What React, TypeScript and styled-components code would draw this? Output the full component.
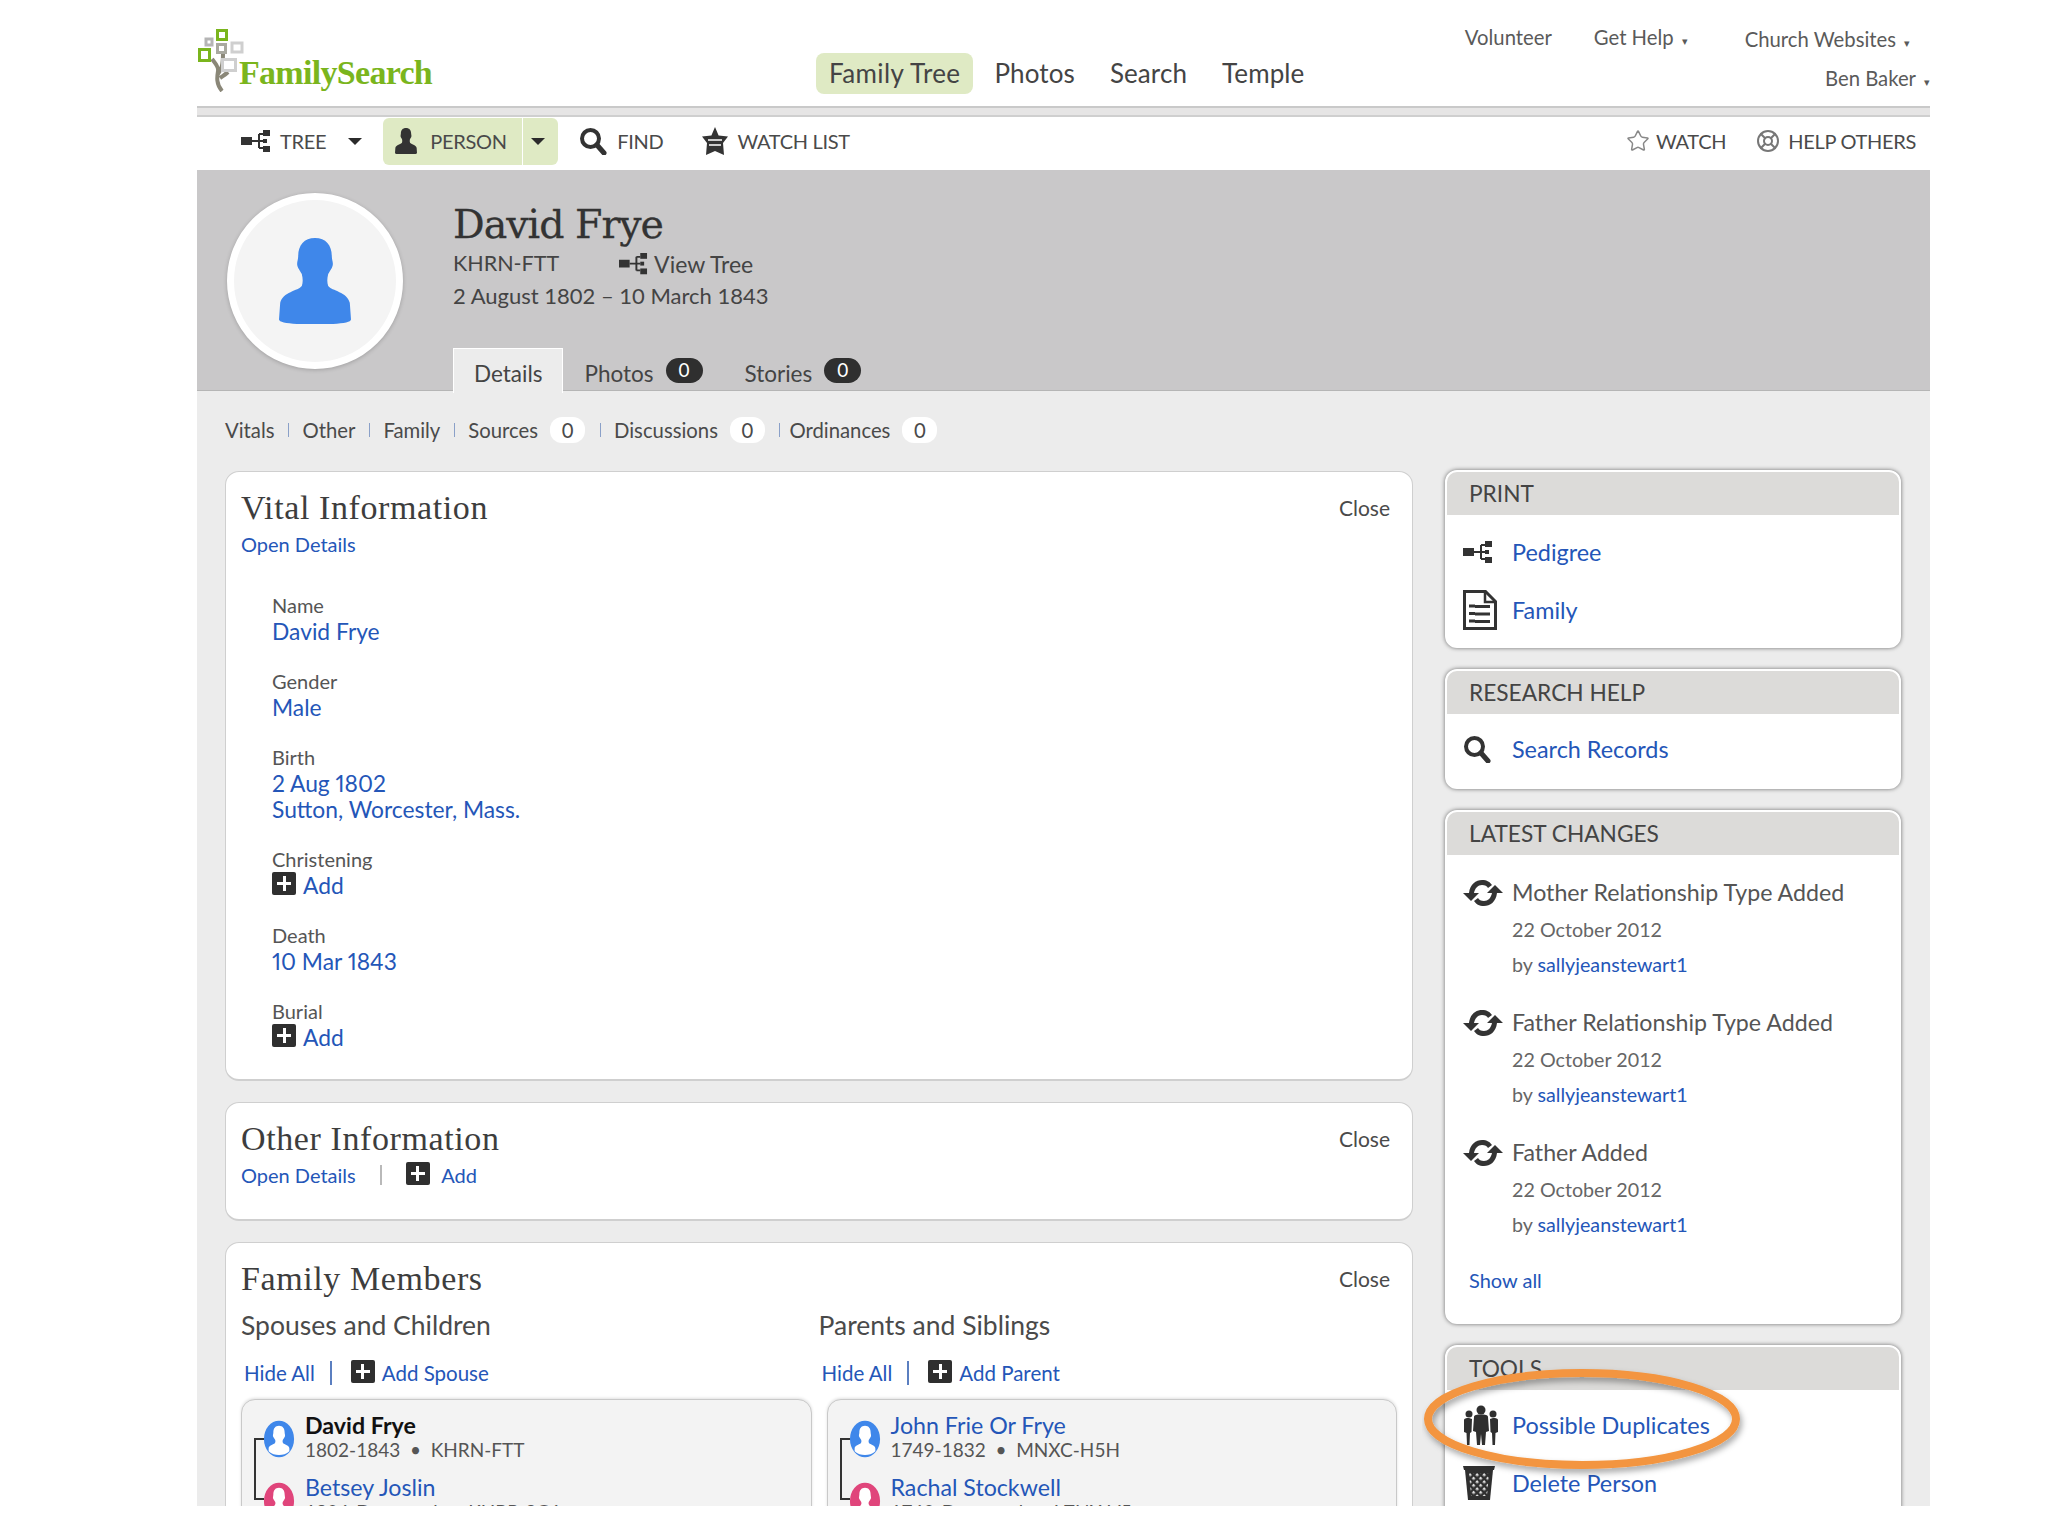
import React from 'react';
import styled, { createGlobalStyle } from 'styled-components';
import { LifeBuoy, Star } from 'lucide-react';

const INK = '#444';
const LINK = '#2456b8';
const DARK = '#2f2f2f';
const SANS = `Lato, "Open Sans", sans-serif`;

const GlobalStyle = createGlobalStyle`
  html, body { margin: 0; padding: 0; background: #fff; }
  body { font-family: ${SANS}; color: ${INK}; }
  * { box-sizing: border-box; }
`;

const Page = styled.div`
  position: relative;
  width: 1733px;
  height: 1506px;
  margin-left: 197px;
  overflow: hidden;
`;
const Header = styled.header`
  display: flex;
  height: 106px;
`;
const Logo = styled.div`
  display: flex;
  align-items: flex-end;
  width: 619px;
  height: 92px;
`;
const LogoText = styled.span`
  font-family: "Liberation Serif", serif;
  font-weight: 700;
  font-size: 34px;
  letter-spacing: -0.7px;
  color: #7ab51d;
  margin: 0 0 -1px -8px;
  line-height: 40px;
`;
const MainNav = styled.nav`
  display: flex;
  align-items: center;
  height: 41px;
  margin-top: 53px;
  gap: 35px;
`;
const NavItem = styled.span<{ $active?: boolean }>`
  font-size: 26px;
  letter-spacing: ${(p) => (p.$active ? '0.4px' : '0.1px')};
  color: ${INK};
  padding: 0 ${(p) => (p.$active ? '13px' : '0')};
  margin-right: ${(p) => (p.$active ? '-14px' : '0')};
  height: 41px;
  line-height: 41px;
  border-radius: 8px;
  background: ${(p) => (p.$active ? '#dfeac4' : 'transparent')};
`;
const TopLinks = styled.div`
  margin-left: auto;
  display: flex;
  flex-direction: column;
  gap: 17px;
  padding-top: 25px;
`;
const TopRow = styled.div`
  display: flex;
  justify-content: flex-end;
  align-items: center;
  gap: 42px;
  height: 24px;
`;
const TopLink = styled.span<{ $gap?: number; $drop?: number }>`
  font-size: 20.3px;
  color: #5a5a5a;
  margin-right: ${(p) => p.$gap ?? 0}px;
  margin-top: ${(p) => p.$drop ?? 0}px;
`;
const Tiny = styled.span`
  font-size: 11px;
  margin-left: 8px;
`;
const Rule = styled.div`
  height: 11px;
  background: #e6e5e5;
  border-top: 2px solid #c9c9c9;
  border-bottom: 2px solid #cfcfcf;
`;
const Toolbar = styled.div`
  display: flex;
  align-items: center;
  height: 53px;
  padding: 0 14px 5px 44px;
`;
const ToolItem = styled.span<{ $mr?: number; $gap?: number }>`
  display: flex;
  align-items: center;
  gap: ${(p) => p.$gap ?? 10}px;
  font-size: 20px;
  color: #4a4a4a;
  letter-spacing: -0.3px;
  margin-right: ${(p) => p.$mr ?? 0}px;
`;
const PersonButton = styled.div`
  display: flex;
  align-items: center;
  height: 47px;
  width: 175px;
  margin-right: 21px;
  border-radius: 6px;
  background: #dfeac4;
`;
const PersonLabel = styled.span`
  display: flex;
  align-items: center;
  gap: 13px;
  width: 140px;
  height: 100%;
  padding-left: 12px;
  font-size: 20px;
  letter-spacing: -0.3px;
  color: #4a4a4a;
  border-right: 1px solid #fff;
`;
const Caret = styled.i`
  display: block;
  width: 0;
  height: 0;
  border-left: 7px solid transparent;
  border-right: 7px solid transparent;
  border-top: 7px solid #2b2b2b;
`;
const TreeCaret = styled(Caret)`
  margin-right: 21px;
`;
const PersonCaret = styled(Caret)`
  margin-left: 8px;
`;
const ToolRight = styled.div`
  margin-left: auto;
  display: flex;
  align-items: center;
  gap: 30px;
`;
const Hero = styled.section`
  display: flex;
  height: 221px;
  padding: 23px 0 0 30px;
  background: #c9c8c9;
  border-bottom: 1px solid #b5b5b5;
`;
const AvatarCircle = styled.div`
  display: flex;
  align-items: center;
  justify-content: center;
  flex: none;
  width: 176px;
  height: 176px;
  border-radius: 50%;
  background: #f4f4f4;
  border: 7px solid #fff;
  box-shadow: 0 1px 4px rgba(0, 0, 0, 0.2);
`;
const HeroInfo = styled.div`
  margin-left: 50px;
  display: flex;
  flex-direction: column;
  flex: 1;
`;
const PersonName = styled.h1`
  margin: 9px 0 0;
  font-family: "DejaVu Serif", serif;
  font-weight: 400;
  font-size: 39.5px;
  line-height: 44px;
  color: #333;
  letter-spacing: -1px;
  -webkit-text-stroke: 0.3px #333;
`;
const HeroLine = styled.div`
  display: flex;
  align-items: center;
  font-size: 22px;
  line-height: 32px;
  color: #444;
`;
const HeroCode = styled.span`
  font-size: 21.5px;
`;
const ViewTree = styled.span`
  display: flex;
  align-items: center;
  gap: 6px;
  margin: 2px 0 0 60px;
  font-size: 23px;
`;
const Tabs = styled.div`
  display: flex;
  align-items: flex-end;
  margin-top: 36px;
`;
const Tab = styled.span<{ $active?: boolean }>`
  display: flex;
  align-items: center;
  height: 45px;
  font-size: 22.5px;
  color: #444;
  padding: 5px ${(p) => (p.$active ? '20px' : '21px')} 0;
  margin-bottom: -1px;
  background: ${(p) => (p.$active ? '#ececec' : 'transparent')};
  border: ${(p) => (p.$active ? '1px solid #fff' : 'none')};
  border-bottom: none;
`;
const TabBadge = styled.b`
  display: inline-block;
  width: 37px;
  height: 25px;
  margin: -5px 0 0 12px;
  border-radius: 13px;
  background: ${DARK};
  color: #fff;
  font-size: 19px;
  font-weight: 400;
  line-height: 23px;
  text-align: center;
`;
const Body = styled.div`
  background: #ececec;
  padding: 0 28px;
  height: 1200px;
`;
const SubNav = styled.div`
  display: flex;
  align-items: center;
  height: 80px;
  padding-bottom: 2px;
  font-size: 20.3px;
  color: #4a4a4a;
`;
const Sep = styled.i<{ $right?: number }>`
  display: block;
  width: 1px;
  height: 14px;
  margin: 0 ${(p) => p.$right ?? 13.5}px 0 13.5px;
  background: #8aa0c8;
`;
const Chip = styled.span`
  display: block;
  width: 35px;
  height: 26px;
  margin: 0 1px 0 12px;
  border-radius: 12px;
  background: #fff;
  text-align: center;
  line-height: 26px;
`;
const Columns = styled.div`
  display: flex;
  align-items: flex-start;
  gap: 32px;
`;
const Main = styled.main`
  width: 1188px;
  display: flex;
  flex-direction: column;
  gap: 21px;
`;
const Card = styled.section<{ $h?: number }>`
  position: relative;
  height: ${(p) => (p.$h ? `${p.$h}px` : 'auto')};
  padding: 14px 15px;
  background: #fff;
  border: 1px solid #cfcfcf;
  border-bottom-width: 2px;
  border-radius: 14px;
`;
const CardHead = styled.div`
  display: flex;
  justify-content: space-between;
  align-items: center;
  height: 43px;
`;
const CardTitle = styled.h2`
  margin: 0;
  font-family: "Liberation Serif", serif;
  font-weight: 400;
  font-size: 34px;
  letter-spacing: 0.6px;
  color: #3d3d3d;
`;
const CloseLink = styled.span`
  font-size: 21px;
  color: #4a4a4a;
  margin-right: 7px;
`;
const SmallLinks = styled.div`
  display: flex;
  align-items: center;
  height: 30px;
  font-size: 20px;
  color: ${LINK};
`;
const LinkSep = styled.i`
  display: block;
  width: 2px;
  height: 20px;
  margin: 0 24px;
  background: #b9b9b9;
`;
const AddBox = styled.span`
  display: inline-block;
  position: relative;
  flex: none;
  width: 24px;
  height: 23px;
  margin: -4px 7px 0 0;
  border-radius: 2px;
  background: ${DARK};
  &::before,
  &::after {
    content: '';
    position: absolute;
    background: #fff;
  }
  &::before {
    left: 5px;
    top: 10px;
    width: 14px;
    height: 3px;
  }
  &::after {
    left: 10.5px;
    top: 4px;
    width: 3px;
    height: 15px;
  }
`;
const Fields = styled.div`
  padding: 34px 0 0 31px;
`;
const Field = styled.div`
  margin-bottom: 25px;
`;
const FieldLabel = styled.div`
  font-size: 20px;
  line-height: 25px;
  color: #555;
`;
const FieldValue = styled.div`
  display: flex;
  align-items: center;
  font-size: 22.8px;
  font-variant-numeric: proportional-nums;
  line-height: 26px;
  color: ${LINK};
`;
const FamilyCols = styled.div`
  display: grid;
  grid-template-columns: 1fr 1fr;
  column-gap: 15px;
`;
const SectionTitle = styled.h3<{ $shift?: number }>`
  margin: 3px 0 0 ${(p) => p.$shift ?? 0}px;
  font-weight: 400;
  font-size: 26.5px;
  line-height: 44px;
  color: #4a4a4a;
`;
const FamilyLinks = styled(SmallLinks)<{ $shift?: number }>`
  font-size: 20.5px;
  margin: 11px 0 11px ${(p) => p.$shift ?? 3}px;
`;
const ThinSep = styled.i`
  display: block;
  width: 2px;
  height: 24px;
  margin: 0 19px 0 15px;
  background: #5b7fc0;
`;
const CoupleBox = styled.div`
  position: relative;
  height: 130px;
  padding: 12px 0 0 63px;
  background: #f3f3f3;
  border: 1px solid #c9c9c9;
  border-radius: 14px 14px 0 0;
  box-shadow: 0 -1px 3px rgba(0, 0, 0, 0.12);
`;
const Bracket = styled.i`
  position: absolute;
  left: 12px;
  top: 38px;
  width: 10px;
  height: 62px;
  border: 2px solid #333;
  border-right: none;
`;
const Member = styled.div`
  position: relative;
  height: 62px;
`;
const MemberAvatar = styled.span`
  position: absolute;
  left: -42px;
  top: 8px;
`;
const MemberName = styled.div<{ $self?: boolean }>`
  font-size: 23.2px;
  font-weight: ${(p) => (p.$self ? 700 : 400)};
  line-height: 26px;
  color: ${(p) => (p.$self ? '#111' : LINK)};
`;
const MemberMeta = styled.div`
  font-size: 19px;
  line-height: 24px;
  color: #555;
  white-space: pre;
`;
const Side = styled.aside`
  width: 456px;
  margin-top: -1px;
  display: flex;
  flex-direction: column;
  gap: 21px;
`;
const Panel = styled.section`
  background: #fff;
  border: 2px solid #fff;
  border-radius: 12px;
  overflow: hidden;
  box-shadow: 0 0 4px rgba(0, 0, 0, 0.55);
`;
const PanelHead = styled.div`
  height: 43px;
  padding-left: 22px;
  background: #dcdbd9;
  font-size: 22.7px;
  line-height: 44px;
  color: #444;
`;
const PanelBody = styled.div<{ $pad?: string }>`
  padding: ${(p) => p.$pad ?? '10px 0'};
`;
const PanelRow = styled.div`
  display: flex;
  align-items: center;
  height: 58px;
  font-size: 23.4px;
  color: ${LINK};
`;
const IconSlot = styled.span`
  display: flex;
  justify-content: flex-start;
  flex: none;
  width: 65px;
  padding-left: 16px;
`;
const ChangeBlock = styled.div`
  margin-bottom: 23px;
`;
const ChangeTitle = styled.div`
  display: flex;
  align-items: center;
  margin-bottom: 2px;
  font-size: 23.2px;
  line-height: 35px;
  color: #555;
`;
const ChangeLine = styled.div`
  padding-left: 65px;
  font-size: 19.7px;
  line-height: 35px;
  color: #666;
  a {
    color: ${LINK};
  }
`;
const ShowAll = styled.div`
  padding: 3px 0 0 22px;
  font-size: 20px;
  color: ${LINK};
`;
const Callout = styled.svg`
  position: absolute;
  left: 1225px;
  top: 1362px;
  pointer-events: none;
`;

const TreeIcon = ({ w = 30 }: { w?: number }) => (
  <svg width={w} height={(w * 22) / 30} viewBox="0 0 30 22">
    <rect x="0" y="7" width="11" height="8" fill="#333" />
    <path d="M11 11h7M18 4v14M18 4h4M18 18h4M18 11h4" stroke="#333" strokeWidth="2" fill="none" />
    <rect x="22" y="0" width="7" height="6" fill="#333" />
    <rect x="22" y="9" width="4" height="4" fill="#333" />
    <rect x="22" y="16" width="7" height="6" fill="#333" />
  </svg>
);

const SearchIcon = ({ size = 28 }: { size?: number }) => (
  <svg width={size} height={size} viewBox="0 0 28 28">
    <circle cx="11.5" cy="11.5" r="8.5" fill="none" stroke="#333" strokeWidth="4" />
    <path d="M18 18l7 8" stroke="#333" strokeWidth="5" strokeLinecap="round" />
  </svg>
);

const BustIcon = ({ size = 24, fill = '#333' }: { size?: number; fill?: string }) => (
  <svg width={size} height={size * 1.2} viewBox="0 0 60 72">
    <path
      fill={fill}
      d="M30 0c9 0 14 6 14 15 0 4 2 6 0 10-1 2-2 3-3 5-1 4-1 7 0 10 3 4 16 5 18 14l1 14c0 3-12 4-30 4S0 71 0 68l1-14c2-9 15-10 18-14 1-3 1-6 0-10-1-2-2-3-3-5-2-4 0-6 0-10C16 6 21 0 30 0z"
    />
  </svg>
);

const RibbonStar = () => (
  <svg width="26" height="28" viewBox="0 0 26 28">
    <path fill="#333" d="M13 0l3.600 8.400L26 9.400l-5 6.600 1 12-9-4-9 4 1-12-5-6.600 9.400-1z" />
    <path stroke="#fff" strokeWidth="1.600" d="M6 13h14M7 18h12" />
  </svg>
);

const FamilyDocIcon = () => (
  <svg width="34" height="40" viewBox="0 0 34 40">
    <path d="M1.500 1.500h21l10 10v27h-31z" fill="#fff" stroke="#333" strokeWidth="3" />
    <path d="M22 2v10h10" fill="none" stroke="#333" strokeWidth="2.500" />
    <path d="M6 16h6M12 16.500h15M6 23.500h6M12 24h15M6 31h6M12 31.500h15" stroke="#333" strokeWidth="3" />
  </svg>
);

const SyncIcon = () => (
  <svg width="40" height="30" viewBox="0 0 40 30">
    <path d="M6 15C7 6 13 2 19 2c5 0 8 2 10 5l-4 3c-1-2-3-3-6-3-4 0-7 3-8 8h5l-8 8-8-8z" fill="#333" />
    <path d="M34 15c-1 9-7 13-13 13-5 0-8-2-10-5l4-3c1 2 3 3 6 3 4 0 7-3 8-8h-5l8-8 8 8z" fill="#333" />
  </svg>
);

const PeopleIcon = () => (
  <svg width="36" height="40" viewBox="0 0 36 40">
    <g fill="#2f2f2f">
      <circle cx="18" cy="5" r="4.500" />
      <path d="M11 12c0-2 3-2.500 7-2.500s7 .5 7 2.500l1 14-3 1-1 13h-3l-1-11-1 11h-3l-1-13-3-1z" />
      <circle cx="6" cy="9" r="3.500" />
      <path d="M1 15c0-1.500 2-2 5-2l3 1-.5 13-1.500 1-.500 12H4l-.5-12-2.500-1z" />
      <circle cx="30" cy="9" r="3.500" />
      <path d="M35 15c0-1.500-2-2-5-2l-3 1 .5 13 1.500 1 .5 12H32l.5-12 2.500-1z" />
    </g>
  </svg>
);

const TrashIcon = () => (
  <svg width="32" height="34" viewBox="0 0 32 34">
    <defs>
      <pattern id="mesh" width="5" height="5" patternUnits="userSpaceOnUse" patternTransform="rotate(45)">
        <rect width="2.500" height="2.500" fill="#ddd" />
      </pattern>
    </defs>
    <path d="M0 0h32l-1 4H1z" fill="#2f2f2f" />
    <path d="M2 4h28l-3 30H5z" fill="#2f2f2f" />
    <path d="M6 7h20l-2 23H8z" fill="url(#mesh)" />
  </svg>
);

const MemberPortrait = ({ color }: { color: string }) => (
  <svg width="32" height="38" viewBox="0 0 34 40">
    <ellipse cx="17" cy="20" rx="16" ry="19.500" fill={color} />
    <path
      fill="#fff"
      d="M17 6c4 0 6 3 6 7 0 2 1 3 0 5l-2 3c-.5 2 0 3 1 4 2 1 6 2 6 5v3c-3 3-7 4-11 4s-8-1-11-4v-3c0-3 4-4 6-5 1-1 1.500-2 1-4l-2-3c-1-2 0-3 0-5 0-4 2-7 6-7z"
    />
  </svg>
);

const LogoMark = () => (
  <svg width="50" height="64" viewBox="0 0 50 64">
    <path
      d="M25 63c-6-7-5-14-4-20 1-4-3-8-6-12M21 46c3-4 5-8 5-20M23 50c3-2 6-4 8-6"
      stroke="#8a8778"
      strokeWidth="4"
      fill="none"
    />
    <g fill="#fff" strokeWidth="3">
      <rect x="20.500" y="2.500" width="9" height="9" stroke="#7ab51d" />
      <rect x="9" y="11" width="6" height="6" stroke="#b5b5b5" />
      <rect x="20.500" y="16.500" width="8" height="8" stroke="#a9a9a0" />
      <rect x="35" y="15" width="10" height="9" stroke="#cfcfcf" />
      <rect x="2.500" y="21.500" width="10" height="11" stroke="#7ab51d" />
      <rect x="25.500" y="31.500" width="13" height="11" stroke="#cfcfcf" />
    </g>
  </svg>
);

const changes = [
  { title: 'Mother Relationship Type Added', date: '22 October 2012' },
  { title: 'Father Relationship Type Added', date: '22 October 2012' },
  { title: 'Father Added', date: '22 October 2012' },
];

const fields = [
  { label: 'Name', values: ['David Frye'] },
  { label: 'Gender', values: ['Male'] },
  { label: 'Birth', values: ['2 Aug 1802', 'Sutton, Worcester, Mass.'] },
  { label: 'Christening', add: true },
  { label: 'Death', values: ['10 Mar 1843'] },
  { label: 'Burial', add: true },
];

const App = () => (
  <>
    <GlobalStyle />
    <Page>
      <Header>
        <Logo>
          <LogoMark />
          <LogoText>FamilySearch</LogoText>
        </Logo>
        <MainNav>
          <NavItem $active>Family Tree</NavItem>
          <NavItem>Photos</NavItem>
          <NavItem>Search</NavItem>
          <NavItem>Temple</NavItem>
        </MainNav>
        <TopLinks>
          <TopRow>
            <TopLink>Volunteer</TopLink>
            <TopLink $gap={15}>
              Get Help<Tiny>▾</Tiny>
            </TopLink>
            <TopLink $gap={20} $drop={3}>
              Church Websites<Tiny>▾</Tiny>
            </TopLink>
          </TopRow>
          <TopRow>
            <TopLink>
              Ben Baker<Tiny>▾</Tiny>
            </TopLink>
          </TopRow>
        </TopLinks>
      </Header>
      <Rule />
      <Toolbar>
        <ToolItem $mr={22} $gap={9}>
          <TreeIcon />
          TREE
        </ToolItem>
        <TreeCaret />
        <PersonButton>
          <PersonLabel>
            <BustIcon size={22} />
            PERSON
          </PersonLabel>
          <PersonCaret />
        </PersonButton>
        <ToolItem $mr={39}>
          <SearchIcon />
          FIND
        </ToolItem>
        <ToolItem $gap={9}>
          <RibbonStar />
          WATCH LIST
        </ToolItem>
        <ToolRight>
          <ToolItem $gap={6}>
            <Star size={24} color="#888" strokeWidth={1.5} />
            WATCH
          </ToolItem>
          <ToolItem $gap={8}>
            <LifeBuoy size={24} color="#777" strokeWidth={2} />
            HELP OTHERS
          </ToolItem>
        </ToolRight>
      </Toolbar>
      <Hero>
        <AvatarCircle>
          <BustIcon size={72} fill="#3f87ea" />
        </AvatarCircle>
        <HeroInfo>
          <PersonName>David Frye</PersonName>
          <HeroLine>
            <HeroCode>KHRN-FTT</HeroCode>
            <ViewTree>
              <TreeIcon w={29} />
              View Tree
            </ViewTree>
          </HeroLine>
          <HeroLine>2 August 1802 – 10 March 1843</HeroLine>
          <Tabs>
            <Tab $active>Details</Tab>
            <Tab>
              Photos<TabBadge>0</TabBadge>
            </Tab>
            <Tab>
              Stories<TabBadge>0</TabBadge>
            </Tab>
          </Tabs>
        </HeroInfo>
      </Hero>
      <Body>
        <SubNav>
          Vitals<Sep />Other<Sep />Family<Sep />Sources<Chip>0</Chip>
          <Sep />Discussions<Chip>0</Chip>
          <Sep $right={9} />Ordinances<Chip>0</Chip>
        </SubNav>
        <Columns>
          <Main>
            <Card $h={610}>
              <CardHead>
                <CardTitle>Vital Information</CardTitle>
                <CloseLink>Close</CloseLink>
              </CardHead>
              <SmallLinks>Open Details</SmallLinks>
              <Fields>
                {fields.map((f) => (
                  <Field key={f.label}>
                    <FieldLabel>{f.label}</FieldLabel>
                    {f.add ? (
                      <FieldValue>
                        <AddBox />
                        Add
                      </FieldValue>
                    ) : (
                      f.values?.map((v) => <FieldValue key={v}>{v}</FieldValue>)
                    )}
                  </Field>
                ))}
              </Fields>
            </Card>
            <Card $h={119}>
              <CardHead>
                <CardTitle>Other Information</CardTitle>
                <CloseLink>Close</CloseLink>
              </CardHead>
              <SmallLinks>
                Open Details
                <LinkSep />
                <AddBox />
                &nbsp;Add
              </SmallLinks>
            </Card>
            <Card>
              <CardHead>
                <CardTitle>Family Members</CardTitle>
                <CloseLink>Close</CloseLink>
              </CardHead>
              <FamilyCols>
                <div>
                  <SectionTitle>Spouses and Children</SectionTitle>
                  <FamilyLinks>
                    Hide All
                    <ThinSep />
                    <AddBox />
                    Add Spouse
                  </FamilyLinks>
                  <CoupleBox>
                    <Bracket />
                    <Member>
                      <MemberAvatar>
                        <MemberPortrait color="#3f87ea" />
                      </MemberAvatar>
                      <MemberName $self>David Frye</MemberName>
                      <MemberMeta>1802-1843  •  KHRN-FTT</MemberMeta>
                    </Member>
                    <Member>
                      <MemberAvatar>
                        <MemberPortrait color="#e0457b" />
                      </MemberAvatar>
                      <MemberName>Betsey Joslin</MemberName>
                      <MemberMeta>1806-Deceased  •  KHRP-2G1</MemberMeta>
                    </Member>
                  </CoupleBox>
                </div>
                <div>
                  <SectionTitle $shift={-8}>Parents and Siblings</SectionTitle>
                  <FamilyLinks $shift={-5}>
                    Hide All
                    <ThinSep />
                    <AddBox />
                    Add Parent
                  </FamilyLinks>
                  <CoupleBox>
                    <Bracket />
                    <Member>
                      <MemberAvatar>
                        <MemberPortrait color="#3f87ea" />
                      </MemberAvatar>
                      <MemberName>John Frie Or Frye</MemberName>
                      <MemberMeta>1749-1832  •  MNXC-H5H</MemberMeta>
                    </Member>
                    <Member>
                      <MemberAvatar>
                        <MemberPortrait color="#e0457b" />
                      </MemberAvatar>
                      <MemberName>Rachal Stockwell</MemberName>
                      <MemberMeta>1760-Deceased  •  LZNX-V5</MemberMeta>
                    </Member>
                  </CoupleBox>
                </div>
              </FamilyCols>
            </Card>
          </Main>
          <Side>
            <Panel>
              <PanelHead>PRINT</PanelHead>
              <PanelBody $pad="8px 0 7px">
                <PanelRow>
                  <IconSlot>
                    <TreeIcon />
                  </IconSlot>
                  Pedigree
                </PanelRow>
                <PanelRow>
                  <IconSlot>
                    <FamilyDocIcon />
                  </IconSlot>
                  Family
                </PanelRow>
              </PanelBody>
            </Panel>
            <Panel>
              <PanelHead>RESEARCH HELP</PanelHead>
              <PanelBody $pad="6px 0 9px">
                <PanelRow>
                  <IconSlot>
                    <SearchIcon />
                  </IconSlot>
                  Search Records
                </PanelRow>
              </PanelBody>
            </Panel>
            <Panel>
              <PanelHead>LATEST CHANGES</PanelHead>
              <PanelBody $pad="20px 0 30px">
                {changes.map((c) => (
                  <ChangeBlock key={c.title}>
                    <ChangeTitle>
                      <IconSlot>
                        <SyncIcon />
                      </IconSlot>
                      {c.title}
                    </ChangeTitle>
                    <ChangeLine>{c.date}</ChangeLine>
                    <ChangeLine>
                      by <a>sallyjeanstewart1</a>
                    </ChangeLine>
                  </ChangeBlock>
                ))}
                <ShowAll>Show all</ShowAll>
              </PanelBody>
            </Panel>
            <Panel>
              <PanelHead>TOOLS</PanelHead>
              <PanelBody $pad="6px 0 10px">
                <PanelRow>
                  <IconSlot>
                    <PeopleIcon />
                  </IconSlot>
                  Possible Duplicates
                </PanelRow>
                <PanelRow>
                  <IconSlot>
                    <TrashIcon />
                  </IconSlot>
                  Delete Person
                </PanelRow>
              </PanelBody>
            </Panel>
          </Side>
        </Columns>
      </Body>
      <Callout width="330" height="124" viewBox="0 0 330 124">
        <defs>
          <filter id="callout-shadow" x="-10%" y="-20%" width="120%" height="150%">
            <feDropShadow dx="2" dy="4" stdDeviation="3" floodColor="#000" floodOpacity="0.35" />
          </filter>
        </defs>
        <ellipse
          cx="160"
          cy="57"
          rx="154"
          ry="46"
          fill="none"
          stroke="#f3953f"
          strokeWidth="8"
          filter="url(#callout-shadow)"
        />
      </Callout>
    </Page>
  </>
);

export default App;
